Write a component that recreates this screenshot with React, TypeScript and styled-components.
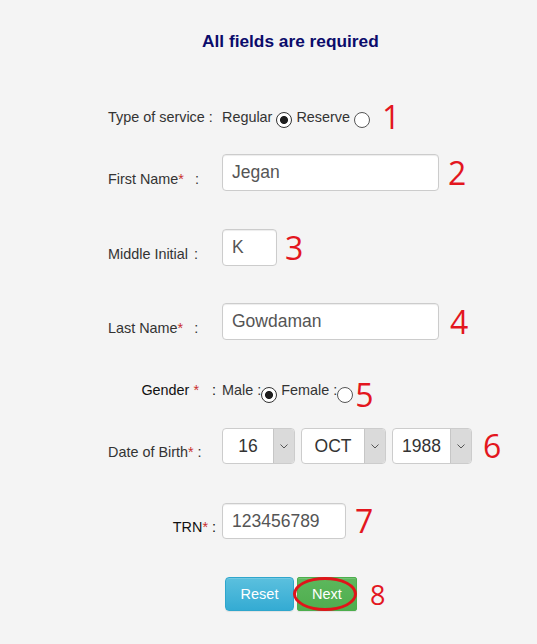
import React from 'react';
import styled, { createGlobalStyle } from 'styled-components';

const GlobalStyle = createGlobalStyle`
  html, body {
    margin: 0;
    padding: 0;
    background: #f4f4f4;
  }
  body {
    font-family: "Liberation Sans", Arial, sans-serif;
    color: #333;
  }
`;

const Page = styled.div`
  min-height: 644px;
  box-sizing: border-box;
  padding: 31px 0 0 108px;
`;

const Title = styled.h1`
  margin: 0 0 0 94px;
  font-size: 17.3px;
  line-height: 20px;
  font-weight: bold;
  color: #0b0b6b;
`;

const Row = styled.div<{ $top: number; $height: number }>`
  display: flex;
  align-items: center;
  margin-top: ${({ $top }) => $top}px;
  height: ${({ $height }) => $height}px;
`;

// labels of text fields sit low, next to the bottom of the box
const Label = styled.label<{ $align?: 'left' | 'right'; $low?: boolean; $dark?: boolean }>`
  flex: 0 0 114px;
  box-sizing: border-box;
  font-size: 14.4px;
  line-height: ${({ $low }) => ($low ? '16px' : '20px')};
  text-align: ${({ $align }) => $align ?? 'left'};
  padding-right: ${({ $align }) => ($align === 'right' ? '6px' : '0')};
  color: ${({ $dark }) => ($dark ? '#111' : '#333')};
  align-self: ${({ $low }) => ($low ? 'flex-end' : 'center')};
  margin-bottom: ${({ $low }) => ($low ? '4px' : '0')};
  white-space: nowrap;
`;

const Star = styled.span`
  color: #c9302c;
`;

const Colon = styled.span<{ $gap: number }>`
  margin-left: ${({ $gap }) => $gap}px;
`;

const OptionText = styled.span`
  font-size: 14.4px;
  line-height: 20px;
  color: #333;
  white-space: nowrap;
`;

const Radio = styled.input.attrs({ type: 'radio', readOnly: true })<{ $gap: number; $drop: number }>`
  appearance: none;
  -webkit-appearance: none;
  box-sizing: border-box;
  width: 16px;
  height: 16px;
  margin: ${({ $drop }) => $drop}px 4px 0 ${({ $gap }) => $gap}px;
  border: 1px solid #555;
  border-radius: 50%;
  background: #fff;
  flex-shrink: 0;

  &:checked {
    border-color: #333;
    background: radial-gradient(circle, #1e1e1e 0 3.6px, #fff 4.4px);
  }
`;

const TextField = styled.input.attrs({ readOnly: true })<{ $width: number; $height: number }>`
  width: ${({ $width }) => $width}px;
  height: ${({ $height }) => $height}px;
  box-sizing: border-box;
  padding: 0 9px;
  border: 1px solid #ccc;
  border-radius: 4px;
  background: #fff;
  box-shadow: inset 0 1px 1px rgba(0, 0, 0, 0.075);
  font: 17.5px "Liberation Sans", Arial, sans-serif;
  color: #555;
  outline: none;
`;

const SelectGroup = styled.div`
  display: flex;
  gap: 6px;
`;

const Select = styled.div<{ $width: number }>`
  display: flex;
  width: ${({ $width }) => $width}px;
  height: 36px;
  box-sizing: border-box;
  border: 1px solid #ccc;
  border-radius: 4px;
  background: #fff;
  overflow: hidden;
`;

const SelectValue = styled.span`
  flex: 1;
  display: flex;
  align-items: center;
  justify-content: center;
  font-size: 17.5px;
  color: #333;
`;

const SelectArrow = styled.span`
  flex: 0 0 20px;
  display: flex;
  align-items: center;
  justify-content: center;
  background: #dadada;
  border-left: 1px solid #c6c6c6;
`;

const Marker = styled.span<{ $gap: number; $size?: number; $drop?: number }>`
  margin-left: ${({ $gap }) => $gap}px;
  margin-top: ${({ $drop }) => $drop ?? 0}px;
  font-family: "Open Sans", sans-serif;
  font-size: ${({ $size }) => $size ?? 32}px;
  line-height: 1;
  color: #e3161e;
`;

const Buttons = styled.div`
  display: flex;
  gap: 3px;
  margin-left: 117px;
`;

const Button = styled.button<{ $kind: 'info' | 'success' }>`
  height: 34px;
  padding: 0;
  width: ${({ $kind }) => ($kind === 'info' ? '69px' : '60px')};
  border: 1px solid ${({ $kind }) => ($kind === 'info' ? '#2ea6cc' : '#4cae4c')};
  border-radius: ${({ $kind }) => ($kind === 'info' ? '4px' : '2px')};
  background: ${({ $kind }) =>
    $kind === 'info'
      ? 'linear-gradient(to bottom, #5bc0de 0%, #34abd3 100%)'
      : 'linear-gradient(to bottom, #5cb85c 0%, #4fad4f 100%)'};
  box-shadow: inset 0 1px 0 rgba(255, 255, 255, 0.15), 0 1px 1px rgba(0, 0, 0, 0.075);
  font: 14.5px "Liberation Sans", Arial, sans-serif;
  color: #fff;
`;

const Circled = styled.div`
  position: relative;
  display: flex;
`;

// red hand-drawn ring over the Next button
const Ring = styled.span`
  position: absolute;
  top: 0;
  bottom: 0;
  left: -4px;
  right: 0;
  border: 3px solid #e0141a;
  border-radius: 50%;
  pointer-events: none;
`;

const Chevron = () => (
  <svg width="8" height="5" viewBox="0 0 8 5">
    <path d="M0.5 0.5 L4 4 L7.5 0.5" fill="none" stroke="#555" strokeWidth="1" />
  </svg>
);

const App: React.FC = () => {
  return (
    <Page>
      <GlobalStyle />
      <Title>All fields are required</Title>

      <Row $top={56} $height={20}>
        <Label>Type of service :</Label>
        <OptionText>Regular</OptionText>
        <Radio name="service" defaultChecked $gap={4} $drop={6} />
        <OptionText>Reserve</OptionText>
        <Radio name="service" $gap={4} $drop={6} />
        <Marker $gap={8}>1</Marker>
      </Row>

      <Row $top={27} $height={37}>
        <Label $low>
          First Name<Star>*</Star>
          <Colon $gap={11}>:</Colon>
        </Label>
        <TextField $width={217} $height={37} defaultValue="Jegan" />
        <Marker $gap={9}>2</Marker>
      </Row>

      <Row $top={38} $height={37}>
        <Label $low>
          Middle Initial<Colon $gap={6}>:</Colon>
        </Label>
        <TextField $width={55} $height={37} defaultValue="K" />
        <Marker $gap={8}>3</Marker>
      </Row>

      <Row $top={37} $height={37}>
        <Label $low>
          Last Name<Star>*</Star>
          <Colon $gap={11}>:</Colon>
        </Label>
        <TextField $width={217} $height={37} defaultValue="Gowdaman" />
        <Marker $gap={11}>4</Marker>
      </Row>

      <Row $top={40} $height={20}>
        <Label $align="right" $dark>
          Gender <Star>*</Star>
          <Colon $gap={13}>:</Colon>
        </Label>
        <OptionText>Male :</OptionText>
        <Radio name="gender" defaultChecked $gap={0} $drop={10} />
        <OptionText>Female :</OptionText>
        <Radio name="gender" $gap={0} $drop={10} />
        <Marker $gap={-2} $drop={10}>5</Marker>
      </Row>

      <Row $top={28} $height={36}>
        <Label $low>
          Date of Birth<Star>*</Star>
          <Colon $gap={4}>:</Colon>
        </Label>
        <SelectGroup>
          <Select $width={73}>
            <SelectValue>16</SelectValue>
            <SelectArrow><Chevron /></SelectArrow>
          </Select>
          <Select $width={85}>
            <SelectValue>OCT</SelectValue>
            <SelectArrow><Chevron /></SelectArrow>
          </Select>
          <Select $width={80}>
            <SelectValue>1988</SelectValue>
            <SelectArrow><Chevron /></SelectArrow>
          </Select>
        </SelectGroup>
        <Marker $gap={11}>6</Marker>
      </Row>

      <Row $top={39} $height={36}>
        <Label $low $align="right" $dark>
          TRN<Star>*</Star>
          <Colon $gap={4}>:</Colon>
        </Label>
        <TextField $width={124} $height={36} defaultValue="123456789" />
        <Marker $gap={9}>7</Marker>
      </Row>

      <Row $top={38} $height={34}>
        <Buttons>
          <Button $kind="info">Reset</Button>
          <Circled>
            <Button $kind="success">Next</Button>
            <Ring />
          </Circled>
        </Buttons>
        <Marker $gap={13} $size={27}>8</Marker>
      </Row>
    </Page>
  );
};

export default App;
